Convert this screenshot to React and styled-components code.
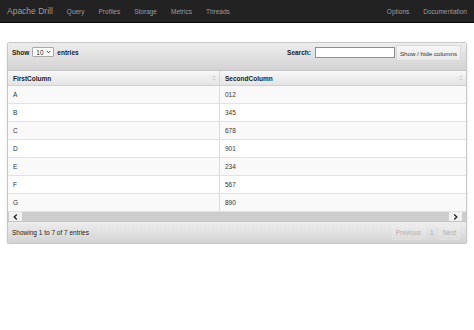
import React from 'react';
import styled, { createGlobalStyle } from 'styled-components';

const GlobalStyle = createGlobalStyle`
    html, body {
        margin: 0;
        padding: 0;
        background: #fff;
        font-family: "Liberation Sans", Arial, sans-serif;
    }
`;

const NavBar = styled.nav`
    height: 23px;
    background: #222;
    border-bottom: 1px solid #080808;
    display: flex;
    align-items: center;
    padding: 0 7px;
    box-sizing: border-box;
`;

const Brand = styled.span`
    color: #9d9d9d;
    font-size: 8.5px;
    margin-right: 7px;
`;

const NavLink = styled.span`
    color: #9d9d9d;
    font-size: 6.5px;
    padding: 0 7px;
    margin-left: ${p => (p.$push ? 'auto' : '0')};
    &:last-child {
        padding-right: 0;
    }
`;

const Panel = styled.div`
    margin: 19px 7px 0 7px;
    width: 458px;
    border: 1px solid #c8c8c8;
    border-radius: 2px;
    box-shadow: 0 1px 2px rgba(0, 0, 0, 0.15);
    background: #fff;
    overflow: hidden;
`;

const Toolbar = styled.div`
    display: flex;
    align-items: ${p => (p.$top ? 'flex-start' : 'center')};
    height: ${p => p.$h}px;
    padding: ${p => (p.$top ? '2px 5px 0 4px' : '0 4px')};
    box-sizing: border-box;
    background: linear-gradient(#ededed, #d3d3d3);
    border-${p => (p.$top ? 'bottom' : 'top')}: 1px solid #c4c4c4;
    font-size: 6.5px;
    color: #222;
`;

const Label = styled.span`
    font-weight: bold;
    color: #222;
    display: flex;
    align-items: center;
    gap: 3px;
    margin-top: ${p => p.$mt || 0}px;
`;

const FakeSelect = styled.span`
    display: inline-flex;
    align-items: center;
    justify-content: space-between;
    width: 22px;
    height: 10px;
    padding: 0 2px 0 3px;
    box-sizing: border-box;
    background: #fff;
    border: 1px solid #a9a9a9;
    border-radius: 1px;
    font-weight: normal;
`;

const SearchBox = styled.span`
    display: inline-block;
    width: 80px;
    height: 11px;
    background: #fff;
    border: 1px solid #8f8f8f;
    box-sizing: border-box;
    margin-left: 1px;
`;

const ToolButton = styled.span`
    margin-left: 1px;
    display: inline-flex;
    align-items: center;
    height: 16px;
    padding: 0 3px;
    box-sizing: border-box;
    background: linear-gradient(#f6f6f6, #e9e9e9);
    border: 1px solid #d8d8d8;
    font-size: 6.2px;
    color: #333;
`;

const SearchGroup = styled.div`
    margin-left: auto;
    display: flex;
    align-items: flex-start;
`;

const Table = styled.div`
    display: grid;
    grid-template-columns: 211px 1fr;
    font-size: 6.5px;
    color: #333;
`;

const HeadCell = styled.div`
    height: 15px;
    display: flex;
    align-items: center;
    justify-content: space-between;
    padding: 0 3px 0 5px;
    box-sizing: border-box;
    background: linear-gradient(#f7f7f7, #e4e4e4);
    border-bottom: 1px solid #d0d0d0;
    border-left: ${p => (p.$first ? 'none' : '1px solid #d6d6d6')};
    font-weight: bold;
    color: #222;
`;

const Cell = styled.div`
    height: 18px;
    display: flex;
    align-items: center;
    padding: 0 5px;
    box-sizing: border-box;
    background: ${p => (p.$odd ? '#f9f9f9' : '#fff')};
    border-bottom: 1px solid #e2e2e2;
    border-left: ${p => (p.$first ? 'none' : '1px solid #dcdcdc')};
`;

const ScrollBar = styled.div`
    display: flex;
    align-items: stretch;
    height: 9px;
    background: #cdcdcd;
`;

const ScrollArrow = styled.span`
    width: 13px;
    display: flex;
    align-items: center;
    justify-content: center;
    background: #f1f1f1;
    margin: ${p => (p.$right ? '0 4px 0 auto' : '0 0 0 1px')};
`;

const Pager = styled.div`
    margin-left: auto;
    margin-right: 2px;
    display: flex;
    align-items: center;
    gap: 1px;
`;

const PageBtn = styled.span`
    padding: 3px 3px;
    color: #b2b2b2;
    background: ${p => (p.$current ? 'transparent' : 'rgba(255,255,255,0.12)')};
    border: 1px solid rgba(255,255,255,0.12);
    font-size: 6.5px;
`;

const SortIcon = () => (
    <svg width="4" height="6" viewBox="0 0 4 6">
        <path d="M0.5 2.3 L2 0.8 L3.5 2.3 M0.5 3.7 L2 5.2 L3.5 3.7" fill="none" stroke="#b8b8b8" strokeWidth="0.7" />
    </svg>
);

const Chevron = ({ dir }) => (
    <svg width="5" height="6" viewBox="0 0 5 6">
        <path d={dir === 'left' ? 'M3.8 0.6 L1.2 3 L3.8 5.4' : 'M1.2 0.6 L3.8 3 L1.2 5.4'} fill="none" stroke="#222" strokeWidth="1.3" />
    </svg>
);

const rows = [
    ['A', '012'],
    ['B', '345'],
    ['C', '678'],
    ['D', '901'],
    ['E', '234'],
    ['F', '567'],
    ['G', '890'],
];

export default function App() {
    return (
        <>
            <GlobalStyle />
            <NavBar>
                <Brand>Apache Drill</Brand>
                <NavLink>Query</NavLink>
                <NavLink>Profiles</NavLink>
                <NavLink>Storage</NavLink>
                <NavLink>Metrics</NavLink>
                <NavLink>Threads</NavLink>
                <NavLink $push>Options</NavLink>
                <NavLink>Documentation</NavLink>
            </NavBar>
            <Panel>
                <Toolbar $top $h={28}>
                    <Label $mt={2}>
                        Show
                        <FakeSelect>
                            10
                            <svg width="5" height="4" viewBox="0 0 5 4">
                                <path d="M0.6 0.8 L2.5 2.8 L4.4 0.8" fill="none" stroke="#333" strokeWidth="0.9" />
                            </svg>
                        </FakeSelect>
                        entries
                    </Label>
                    <SearchGroup>
                        <Label $mt={2}>Search: <SearchBox /></Label>
                        <ToolButton>Show / hide columns</ToolButton>
                    </SearchGroup>
                </Toolbar>
                <Table>
                    <HeadCell $first>FirstColumn<SortIcon /></HeadCell>
                    <HeadCell>SecondColumn<SortIcon /></HeadCell>
                    {rows.map(([a, b], i) => (
                        <React.Fragment key={a}>
                            <Cell $first $odd={i % 2 === 0}>{a}</Cell>
                            <Cell $odd={i % 2 === 0}>{b}</Cell>
                        </React.Fragment>
                    ))}
                </Table>
                <ScrollBar>
                    <ScrollArrow><Chevron dir="left" /></ScrollArrow>
                    <ScrollArrow $right><Chevron dir="right" /></ScrollArrow>
                </ScrollBar>
                <Toolbar $h={22}>
                    <span>Showing 1 to 7 of 7 entries</span>
                    <Pager>
                        <PageBtn>Previous</PageBtn>
                        <PageBtn $current>1</PageBtn>
                        <PageBtn>Next</PageBtn>
                    </Pager>
                </Toolbar>
            </Panel>
        </>
    );
}
